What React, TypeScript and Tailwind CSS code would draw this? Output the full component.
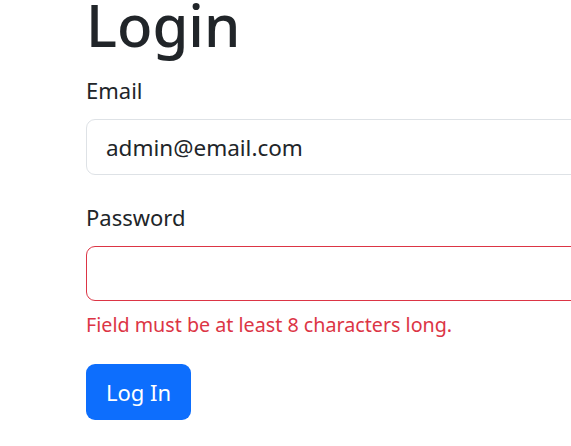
import React, { useState } from "react";

const App: React.FC = () => {
  const [email, setEmail] = useState<string>("admin@email.com");
  const [password, setPassword] = useState<string>("");

  return (
    <div
      className="w-[571px] h-[446px] overflow-hidden bg-white text-[#212529]"
      style={{ fontFamily: '"Noto Sans", "Open Sans", sans-serif' }}
    >
      <div className="w-[700px] pl-[86px] mt-[-11px]">
        <h1 className="text-[58px] leading-[72px] font-medium mb-[11px]">Login</h1>

        {/* email */}
        <div className="mb-[24px]">
          <label className="block text-[22px] leading-[36px] mb-[11px]">Email</label>
          <input
            type="email"
            value={email}
            onChange={(e) => setEmail(e.target.value)}
            className="block w-full h-[56px] px-[19px] text-[22.5px] border border-[#dee2e6] rounded-[9px] outline-none"
          />
        </div>

        {/* password */}
        <div>
          <label className="block text-[22px] leading-[36px] mb-[11px]">Password</label>
          <input
            type="password"
            value={password}
            onChange={(e) => setPassword(e.target.value)}
            className="block w-full h-[55px] px-[19px] text-[22.5px] border border-[#dc3545] rounded-[9px] outline-none"
          />
          <div className="mt-[9px] text-[19.7px] leading-[30px] text-[#dc3545]">
            Field must be at least 8 characters long.
          </div>
        </div>

        <button className="mt-[24px] h-[56px] px-[20px] bg-[#0d6efd] text-white text-[22px] rounded-[9px]">
          Log In
        </button>
      </div>
    </div>
  );
};

export default App;
